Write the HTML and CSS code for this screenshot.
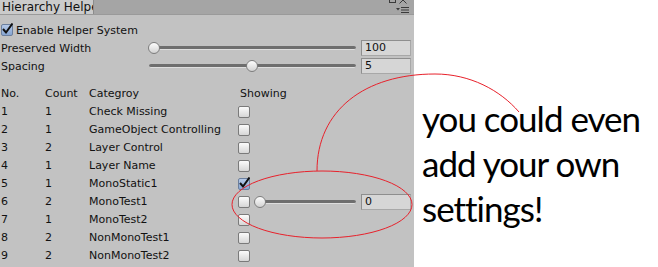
FILE: index.html
```html
<!DOCTYPE html>
<html lang="en">
  <head>
    <meta charset="UTF-8" />
    <meta name="viewport" content="width=device-width, initial-scale=1.0" />
    <title>Hierarchy Helper</title>
    <link rel="stylesheet" href="styles.css">
  </head>
  <body>
    <div class="page">
      <div class="panel">
        <div class="tabbar">
          <div class="tab">Hierarchy Helper</div>
          <div class="win-buttons">
            <span class="btn-max"></span>
            <svg class="btn-close" width="8" height="4" viewBox="0 0 8 4"><path d="M0.5 3.5 L4 0 L7.5 3.5" fill="none" stroke="#3a3a3a" stroke-width="1"/></svg>
          </div>
          <svg class="tab-menu" width="13" height="6" viewBox="0 0 13 6">
            <path d="M0 1 H4 L2 3.5 Z" fill="#3a3a3a"/>
            <path d="M5 0.5 H13 M5 3 H13 M5 5.5 H13" stroke="#3a3a3a" stroke-width="1"/>
          </svg>
        </div>

        <div class="content">
          <div class="row">
            <span class="check on">
              <svg width="12" height="12" viewBox="0 0 12 12"><path d="M2 6 L5 9.5 L11.5 0.5" fill="none" stroke="#111" stroke-width="2"/></svg>
            </span>
            <span class="toggle-label">Enable Helper System</span>
          </div>
          <div class="row">
            <span class="prop-label">Preserved Width</span>
            <div class="slider"><div class="rail"><div class="thumb" style="left: 0%"></div></div></div>
            <div class="field">100</div>
          </div>
          <div class="row">
            <span class="prop-label">Spacing</span>
            <div class="slider"><div class="rail"><div class="thumb" style="left: 50%"></div></div></div>
            <div class="field">5</div>
          </div>

          <div class="table">
            <div class="thead">No.</div>
            <div class="thead">Count</div>
            <div class="thead">Categroy</div>
            <div class="thead showing">Showing</div>

            <div>1</div><div>1</div><div>Check Missing</div><div class="cell"><span class="check"></span></div>
            <div>2</div><div>1</div><div class="clip">GameObject Controlling</div><div class="cell"><span class="check"></span></div>
            <div>3</div><div>2</div><div>Layer Control</div><div class="cell"><span class="check"></span></div>
            <div>4</div><div>1</div><div>Layer Name</div><div class="cell"><span class="check"></span></div>
            <div>5</div><div>1</div><div>MonoStatic1</div>
            <div class="cell">
              <span class="check on">
                <svg width="12" height="12" viewBox="0 0 12 12"><path d="M2 6 L5 9.5 L11.5 0.5" fill="none" stroke="#111" stroke-width="2"/></svg>
              </span>
            </div>
            <div>6</div><div>2</div><div>MonoTest1</div>
            <div class="cell">
              <span class="check"></span>
              <div class="slider small"><div class="rail"><div class="thumb" style="left: 0%"></div></div></div>
              <div class="field">0</div>
            </div>
            <div>7</div><div>1</div><div>MonoTest2</div><div class="cell"><span class="check"></span></div>
            <div>8</div><div>2</div><div>NonMonoTest1</div><div class="cell"><span class="check"></span></div>
            <div>9</div><div>2</div><div>NonMonoTest2</div><div class="cell"><span class="check"></span></div>
          </div>
        </div>
      </div>

      <div class="note">you could even<br>add your own<br>settings!</div>

      <svg class="annotation" width="658" height="267" viewBox="0 0 658 267">
        <ellipse cx="322" cy="204.5" rx="90" ry="33.5" fill="none" stroke="#e8212b" stroke-width="1"/>
        <path d="M317 171 C317 110, 365 74, 435 74 C470 74, 500 90, 519 112" fill="none" stroke="#e8212b" stroke-width="1"/>
      </svg>
    </div>
  </body>
</html>
```

FILE: styles.css
```css
body {
  margin: 0;
  background: #ffffff;
  font-family: "DejaVu Sans", Verdana, sans-serif;
}
.page {
  position: relative;
  display: flex;
  width: 658px;
  height: 267px;
  overflow: hidden;
}
.panel {
  width: 414px;
  height: 267px;
  flex-shrink: 0;
  background: #c2c2c2;
  font-size: 11px;
  color: #111;
}
.tabbar {
  position: relative;
  display: flex;
  height: 14px;
  background: #a5a5a5;
  border-bottom: 1px solid #9a9a9a;
}
.tab {
  width: 91px;
  height: 14px;
  padding-left: 2px;
  font-size: 12px;
  line-height: 14px;
  background: #cbcbcb;
  border-right: 1px solid #8c8c8c;
  overflow: hidden;
  white-space: nowrap;
}
.win-buttons {
  position: absolute;
  top: 0;
  right: 7px;
  display: flex;
  gap: 3px;
}
.btn-max {
  width: 5px;
  height: 2px;
  border: 1px solid #3a3a3a;
  border-top: none;
}
.tab-menu {
  position: absolute;
  top: 7px;
  right: 5px;
}
.content {
  padding: 6px 3px 0 1px;
}
.row {
  display: flex;
  align-items: center;
  height: 18px;
}
.toggle-label {
  margin-left: 3px;
}
.prop-label {
  width: 147px;
  flex-shrink: 0;
}
.slider {
  flex: 1;
  position: relative;
  height: 18px;
}
.slider::before {
  content: "";
  position: absolute;
  left: 1px;
  right: 0;
  top: 7px;
  height: 3px;
  border-radius: 2px;
  background: #6e6e6e;
  border-bottom: 1px solid #dedede;
}
.rail {
  position: relative;
  height: 18px;
  margin-right: 12px;
}
.thumb {
  position: absolute;
  top: 3px;
  width: 10px;
  height: 10px;
  border: 1px solid #7d7d7d;
  border-radius: 50%;
  background: linear-gradient(#fdfdfd, #d2d2d2);
}
.field {
  width: 45px;
  height: 14px;
  margin-left: 5px;
  padding-left: 3px;
  line-height: 14px;
  background: #d6d6d6;
  border: 1px solid #8e8e8e;
  border-right-color: #a8a8a8;
  border-bottom-color: #a8a8a8;
}
.check {
  position: relative;
  width: 10px;
  height: 10px;
  flex-shrink: 0;
  border: 1px solid #7a7a7a;
  border-radius: 2px;
  background: linear-gradient(#fbfbfb, #d6d6d6);
}
.check.on {
  background: linear-gradient(#b5c9e8, #86a5d2);
  border-color: #6b7f9e;
}
.check svg {
  position: absolute;
  left: -1px;
  top: -2px;
}
.table {
  display: grid;
  grid-template-columns: 44px 44px 149px 1fr;
  grid-template-rows: 19px;
  grid-auto-rows: 18px;
  margin-top: 9px;
  line-height: 18px;
}
.thead {
  line-height: 19px;
}
.showing {
  padding-left: 2px;
}
.clip {
  overflow: hidden;
  white-space: nowrap;
}
.cell {
  display: flex;
  align-items: center;
}
.slider.small {
  margin-left: 4px;
}
.note {
  padding: 96px 0 0 8px;
  font-family: Lato, "Open Sans", sans-serif;
  font-size: 35px;
  letter-spacing: -1px;
  line-height: 45px;
  color: #000;
  white-space: nowrap;
}
.annotation {
  position: absolute;
  left: 0;
  top: 0;
  pointer-events: none;
}
```
